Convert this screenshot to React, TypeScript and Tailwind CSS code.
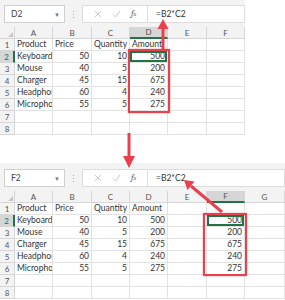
import React from 'react'

type Cell = string | number | null

interface SheetProps {
  name:      string
  cols:      string[]
  template:  string
  rows:      Cell[][]
  activeCol: number
  barClass:  string
}

const DATA: Cell[][] = [
  ['Product',    'Price', 'Quantity', 'Amount'],
  ['Keyboard',   50, 10, 500],
  ['Mouse',      40, 5,  200],
  ['Charger',    45, 15, 675],
  ['Headphones', 60, 4,  240],
  ['Microphones',55, 5,  275],
  [null, null, null, null],
  [null, null, null, null],
]

const TOP_ROWS = DATA.map(r => [...r, null, null])
const BOTTOM_ROWS = DATA.map((r, i) => [...r, null, i === 0 || i > 5 ? null : (DATA[i][3] as number), null])

function FormulaBar({ name, className }: { name: string; className: string }) {
  return (
    <div className={`flex items-end bg-[#f3f3f3] pb-[4px] ${className}`}>
      {/* Name box */}
      <div className="ml-[4px] w-[61px] h-[18px] bg-white border border-[#cfcfcf] flex items-center justify-between pl-[6px] pr-[4px]">
        <span className="text-[8.5px] text-[#444]">{name}</span>
        <span className="text-[6px] text-[#777]">▼</span>
      </div>
      <div className="w-[17px] h-[18px] flex flex-col items-center justify-center gap-[2px]">
        <span className="w-[1px] h-[1px] bg-[#aaa]" />
        <span className="w-[1px] h-[1px] bg-[#aaa]" />
        <span className="w-[1px] h-[1px] bg-[#aaa]" />
      </div>
      {/* Cancel / enter / fx */}
      <div className="w-[65px] h-[18px] bg-white border-l border-y border-[#dcdcdc] flex items-center pl-[11px]">
        <svg width="8" height="8" viewBox="0 0 8 8" className="mr-[10px]">
          <path d="M1 1 L7 7 M7 1 L1 7" stroke="#c8c8c8" strokeWidth="1" />
        </svg>
        <svg width="9" height="8" viewBox="0 0 9 8" className="mr-[10px]">
          <path d="M1 4.5 L3.5 7 L8 1" stroke="#c8c8c8" strokeWidth="1" fill="none" />
        </svg>
        <span className="text-[9px] italic text-[#666] font-serif">
          f<span className="text-[6px]">x</span>
        </span>
      </div>
      {/* Formula input */}
      <div className="flex-1 h-[18px] bg-white border border-[#dcdcdc] flex items-center pl-[8px]">
        <span className="text-[8.5px] text-[#333]">=B2*C2</span>
      </div>
    </div>
  )
}

function Sheet({ name, cols, template, rows, activeCol, barClass }: SheetProps) {
  return (
    <div className="flex flex-col">
      <FormulaBar name={name} className={barClass} />
      <div className={`grid ${template}`}>
        {/* Corner */}
        <div className="h-[12px] bg-[#f3f3f3] border-r border-b border-[#d6d6d6] flex items-end justify-end pr-[1px] pb-[1px]">
          <svg width="5" height="5" viewBox="0 0 5 5">
            <path d="M5 0 L5 5 L0 5 Z" fill="#c6c6c6" />
          </svg>
        </div>
        {cols.map((c, i) => (
          <div
            key={c}
            className={`h-[12px] flex items-center justify-center text-[8px] text-[#555] border-r border-[#d6d6d6] ${
              i === activeCol ? 'bg-[#d6d6d6] border-b-2 border-b-[#217346]' : 'bg-[#f3f3f3] border-b'
            }`}
          >
            {c}
          </div>
        ))}

        {rows.map((row, r) => (
          <React.Fragment key={r}>
            <div
              className={`h-[12px] flex items-center justify-center text-[8px] text-[#555] border-b border-[#d6d6d6] ${
                r === 1 ? 'bg-[#d6d6d6] border-r-2 border-r-[#217346] text-[#217346]' : 'bg-[#f3f3f3] border-r'
              }`}
            >
              {r + 1}
            </div>
            {cols.map((_, c) => {
              const v = row[c] ?? null
              const isNum = typeof v === 'number'
              const active = r === 1 && c === activeCol
              return (
                <div
                  key={c}
                  className={`relative h-[12px] border-r border-b border-[#e2e2e2] overflow-hidden whitespace-nowrap text-[8.5px] leading-[11px] text-[#333] px-[2px] ${
                    isNum ? 'text-right' : 'text-left'
                  }`}
                >
                  {v}
                  {active && (
                    <div className="absolute inset-0 border-2 border-[#217346]" />
                  )}
                </div>
              )
            })}
          </React.Fragment>
        ))}
      </div>
    </div>
  )
}

export default function App() {
  return (
    <div className="relative w-[285px] h-[300px] bg-white overflow-hidden font-['Lato','Liberation_Sans',sans-serif]">
      <div className="w-[245px]">
        <Sheet
          name="D2"
          cols={['A', 'B', 'C', 'D', 'E', 'F']}
          template="grid-cols-[15px_38px_39px_38px_38px_39px_38px]"
          rows={TOP_ROWS}
          activeCol={3}
          barClass="h-[27px]"
        />
      </div>

      <div className="h-[28px]" />

      <Sheet
        name="F2"
        cols={['A', 'B', 'C', 'D', 'E', 'F', 'G']}
        template="grid-cols-[15px_38px_39px_38px_38px_39px_38px_40px]"
        rows={BOTTOM_ROWS}
        activeCol={5}
        barClass="h-[28px]"
      />

      {/* Annotation boxes */}
      <div className="absolute left-[128px] top-[49px] w-[42px] h-[64px] border-2 border-[#e8404c] shadow-[0_0_2px_rgba(232,64,76,0.5)]" />
      <div className="absolute left-[203px] top-[213px] w-[44px] h-[63px] border-2 border-[#e8404c] shadow-[0_0_2px_rgba(232,64,76,0.5)]" />

      {/* Arrows */}
      <svg className="absolute inset-0 pointer-events-none" width="285" height="300" viewBox="0 0 285 300">
        <g fill="#e8404c" stroke="#e8404c">
          <line x1="163" y1="49" x2="163" y2="27" strokeWidth="3" />
          <polygon points="157.5,29 168.5,29 163,19" stroke="none" />

          <line x1="129" y1="133" x2="129" y2="158" strokeWidth="3" />
          <polygon points="123,156 135,156 129,168" stroke="none" />

          <line x1="222" y1="212" x2="191" y2="186" strokeWidth="3" />
          <polygon points="184,180 194.5,181.5 187.5,190" stroke="none" />
        </g>
      </svg>
    </div>
  )
}
